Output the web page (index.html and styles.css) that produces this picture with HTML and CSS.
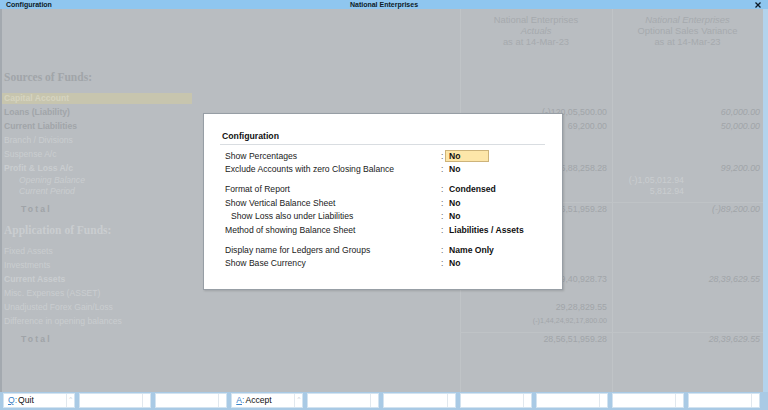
FILE: index.html
```html
<!DOCTYPE html>
<html lang="en">
<head>
    <meta charset="UTF-8">
    <title>Configuration</title>
    <link rel="stylesheet" href="styles.css">
</head>
<body>
<div class="window">
    <div class="titlebar">
        <span>Configuration</span>
        <span>National Enterprises</span>
        <span class="tb-close">
            <svg width="6" height="6" viewBox="0 0 6 6"><path d="M0.5 0.5L5.5 5.5M5.5 0.5L0.5 5.5" stroke="#0d1a26" stroke-width="1.3"/></svg>
        </span>
    </div>

    <div class="main">
        <!-- column heads -->
        <div class="row head">
            <div></div>
            <div class="c">National Enterprises</div>
            <div class="c it">National Enterprises</div>
        </div>
        <div class="row head">
            <div></div>
            <div class="c it">Actuals</div>
            <div class="c">Optional Sales Variance</div>
        </div>
        <div class="row head">
            <div></div>
            <div class="c">as at 14-Mar-23</div>
            <div class="c">as at 14-Mar-23</div>
        </div>

        <div class="row section first"><div class="name dark">Sources of Funds:</div><div></div><div></div></div>
        <div class="row group"><div class="name"><span class="pick b">Capital Account</span></div><div></div><div></div></div>
        <div class="row"><div class="name b dark">Loans (Liability)</div><div class="amt dark">(-)120,05,500.00</div><div class="amt2 dark">60,000.00</div></div>
        <div class="row"><div class="name b dark">Current Liabilities</div><div class="amt dark">69,200.00</div><div class="amt2 dark">50,000.00</div></div>
        <div class="row"><div class="name">Branch / Divisions</div><div></div><div></div></div>
        <div class="row"><div class="name">Suspense A/c</div><div></div><div></div></div>
        <div class="row"><div class="name b">Profit &amp; Loss A/c</div><div class="amt dark">28,55,88,258.28</div><div class="amt2 dark">99,200.00</div></div>
        <div class="row sub"><div class="name it">Opening Balance</div><div></div><div class="subamt">(-)1,05,012.94</div></div>
        <div class="row sub"><div class="name it">Current Period</div><div></div><div class="subamt">5,812.94</div></div>
        <div class="row total"><div class="name tot">Total</div><div class="amt dark line">28,56,51,959.28</div><div class="amt2 dark line">(-)89,200.00</div></div>

        <div class="row section"><div class="name">Application of Funds:</div><div></div><div></div></div>
        <div class="row group"><div class="name">Fixed Assets</div><div></div><div></div></div>
        <div class="row"><div class="name">Investments</div><div></div><div></div></div>
        <div class="row"><div class="name b">Current Assets</div><div class="amt dark">29,40,928.73</div><div class="amt2 dark">28,39,629.55</div></div>
        <div class="row"><div class="name">Misc. Expenses (ASSET)</div><div></div><div></div></div>
        <div class="row"><div class="name">Unadjusted Forex Gain/Loss</div><div class="amt dark">29,28,829.55</div><div></div></div>
        <div class="row"><div class="name">Difference in opening balances</div><div class="amt dark small">(-)1,44,24,92,17,800.00</div><div></div></div>
        <div class="row total last"><div class="name tot">Total</div><div class="amt dark line">28,56,51,959.28</div><div class="amt2 dark line">28,39,629.55</div></div>
    </div>

    <div class="keys">
        <div class="key"><div class="key-label"><u>Q</u><i>:</i>Quit</div><div class="key-more">^</div></div>
        <div class="key"><div class="key-label"></div><div class="key-more"></div></div>
        <div class="key"><div class="key-label"></div><div class="key-more"></div></div>
        <div class="key"><div class="key-label"><u>A</u><i>:</i>Accept</div><div class="key-more">^</div></div>
        <div class="key"><div class="key-label"></div><div class="key-more"></div></div>
        <div class="key"><div class="key-label"></div><div class="key-more"></div></div>
        <div class="key"><div class="key-label"></div><div class="key-more"></div></div>
        <div class="key"><div class="key-label"></div><div class="key-more"></div></div>
        <div class="key"><div class="key-label"></div><div class="key-more"></div></div>
        <div class="key"><div class="key-label"></div><div class="key-more"></div></div>
    </div>

    <div class="dialog">
        <div class="dlg-title">Configuration</div>
        <div class="dlg-body">
            <div class="opt-group">
                <div class="opt"><div class="opt-label">Show Percentages</div><div class="opt-colon">:</div><div><span class="opt-value active">No</span></div></div>
                <div class="opt"><div class="opt-label">Exclude Accounts with zero Closing Balance</div><div class="opt-colon">:</div><div><span class="opt-value">No</span></div></div>
            </div>
            <div class="opt-group">
                <div class="opt"><div class="opt-label">Format of Report</div><div class="opt-colon">:</div><div><span class="opt-value">Condensed</span></div></div>
                <div class="opt"><div class="opt-label">Show Vertical Balance Sheet</div><div class="opt-colon">:</div><div><span class="opt-value">No</span></div></div>
                <div class="opt"><div class="opt-label indent">Show Loss also under Liabilities</div><div class="opt-colon">:</div><div><span class="opt-value">No</span></div></div>
                <div class="opt"><div class="opt-label">Method of showing Balance Sheet</div><div class="opt-colon">:</div><div><span class="opt-value">Liabilities / Assets</span></div></div>
            </div>
            <div class="opt-group">
                <div class="opt"><div class="opt-label">Display name for Ledgers and Groups</div><div class="opt-colon">:</div><div><span class="opt-value">Name Only</span></div></div>
                <div class="opt"><div class="opt-label">Show Base Currency</div><div class="opt-colon">:</div><div><span class="opt-value">No</span></div></div>
            </div>
        </div>
    </div>
</div>
</body>
</html>
```

FILE: styles.css
```css
* {
    margin: 0;
    padding: 0;
    box-sizing: border-box;
}

body {
    width: 768px;
    height: 410px;
    overflow: hidden;
    font-family: "Liberation Sans", Arial, sans-serif;
    font-size: 8.6px;
    color: #111;
    background: #b9bdc1;
}

.window {
    position: relative;
    height: 410px;
    display: flex;
    flex-direction: column;
}

/* title bar */
.titlebar {
    height: 9px;
    line-height: 9px;
    background: #8fc6ef;
    display: grid;
    grid-template-columns: 1fr auto 1fr;
    align-items: center;
    padding: 0 6px;
    font-size: 7px;
    font-weight: bold;
    color: #0d1a26;
}

.tb-close {
    justify-self: end;
    display: flex;
    margin-right: 1px;
}

/* dimmed report behind the popup */
.main {
    flex: 1;
    padding-top: 4.5px;
    border-left: 2px solid #a3a9af;
    border-right: 5px solid #b3d3ec;
    background-color: #b9bdc1;
    background-image: linear-gradient(to right,
        transparent 458px, #c0c4c7 458px, #c0c4c7 459px, transparent 459px,
        transparent 610px, #c0c4c7 610px, #c0c4c7 611px, transparent 611px);
    color: #cacdd0;
}

.row {
    display: grid;
    grid-template-columns: 458px 152px 1fr;
    height: 14px;
    line-height: 14px;
    white-space: nowrap;
}

.row.head {
    height: 11px;
    line-height: 11px;
    font-size: 9.4px;
    color: #a6aaae;
}

.row .c {
    text-align: center;
}

.it {
    font-style: italic;
}

.b {
    font-weight: bold;
}

.dark {
    color: #a1a5a9;
}

.row.section {
    height: 16px;
    line-height: 16px;
    margin-top: 6px;
}

.row.section.first {
    margin-top: 22.5px;
}

.row.section .name {
    font-family: "Liberation Serif", "Times New Roman", serif;
    font-weight: bold;
    font-size: 11.5px;
    padding-left: 2px;
}

.row.group {
    margin-top: 6px;
}

.name {
    padding-left: 2px;
    overflow: hidden;
}

.pick {
    display: block;
    width: 190px;
    height: 11px;
    line-height: 11px;
    margin: 1.5px 0 0 -2px;
    padding-left: 2px;
    background: #c7c5ae;
    color: #d6d4c0;
}

.row.sub {
    height: 11px;
    line-height: 11px;
}

.row.sub .name {
    padding-left: 17px;
}

.row.total {
    margin-top: 5px;
}

.row.total.last {
    margin-top: 4px;
}

.name.tot {
    padding-left: 19px;
    font-weight: bold;
    letter-spacing: 2.2px;
    color: #a0a4a8;
}

.amt {
    text-align: right;
    padding-right: 5px;
    font-size: 8.8px;
}

.amt.small {
    font-size: 7.1px;
}

.amt2 {
    text-align: right;
    padding-right: 3px;
    font-size: 8.8px;
    font-style: italic;
}

.subamt {
    text-align: right;
    padding-right: 79px;
    font-size: 8.8px;
}

.line {
    border-top: 1px solid #bfc3c6;
    line-height: 12px;
}

/* button bar */
.keys {
    height: 18px;
    display: flex;
    gap: 4px;
    padding: 1px 8px 2px 3px;
    background: #a9cae5;
}

.key {
    flex: 1;
    display: flex;
    background: #fff;
    border: 1px solid #d3e3f0;
}

.key-label {
    flex: 1;
    padding-left: 4px;
    line-height: 13px;
    color: #111;
}

.key-label u {
    color: #3b82c6;
    text-decoration-color: #3b82c6;
}

.key-label i {
    font-style: normal;
    color: #3b82c6;
    margin-right: 1px;
}

.key-more {
    width: 8px;
    border-left: 1px solid #e1e8ee;
    font-size: 6px;
    line-height: 11px;
    text-align: center;
    color: #c2ccd4;
}

/* popup */
.dialog {
    position: absolute;
    left: 203px;
    top: 113px;
    width: 360px;
    height: 177px;
    padding: 16px 17px 0 16px;
    background: #fff;
    border: 1px solid #979ea5;
    box-shadow: 1px 1px 2px rgba(0, 0, 0, 0.15);
    color: #1a1a1a;
}

.dlg-title {
    font-size: 8.7px;
    font-weight: bold;
    line-height: 12px;
    padding: 0 0 2px 2px;
    border-bottom: 1px solid #d9dde1;
    color: #111;
}

.dlg-body {
    padding-top: 4.5px;
}

.opt-group + .opt-group {
    margin-top: 6.5px;
}

.opt {
    display: grid;
    grid-template-columns: 221px 4px 1fr;
    height: 13.5px;
    line-height: 13.5px;
    white-space: nowrap;
}

.opt-label {
    padding-left: 5px;
}

.opt-label.indent {
    padding-left: 11px;
}

.opt-colon {
    color: #666;
}

.opt-value {
    display: inline-block;
    font-weight: bold;
    padding-left: 4px;
    color: #111;
}

.opt-value.active {
    width: 44px;
    height: 12px;
    line-height: 10px;
    padding-left: 3px;
    vertical-align: top;
    margin-top: 0.5px;
    background: #fde6a9;
    border: 1px solid #cdb37a;
}
```
